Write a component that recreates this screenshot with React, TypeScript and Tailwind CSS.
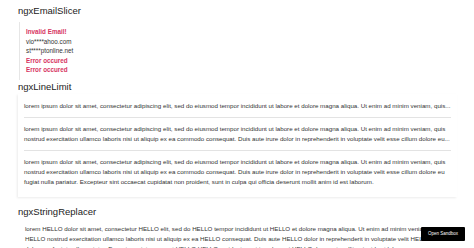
import React from 'react'

const font = { fontFamily: '"Liberation Sans", Arial, sans-serif' }

const emails = [
  { text: 'Invalid Email!', error: true },
  { text: 'vio****ahoo.com', error: false },
  { text: 'st****ptonline.net', error: false },
  { text: 'Error occured', error: true },
  { text: 'Error occured', error: true },
]

const limited: string[][] = [
  [
    'lorem ipsum dolor sit amet, consectetur adipiscing elit, sed do eiusmod tempor incididunt ut labore et dolore magna aliqua. Ut enim ad minim veniam, quis...',
  ],
  [
    'lorem ipsum dolor sit amet, consectetur adipiscing elit, sed do eiusmod tempor incididunt ut labore et dolore magna aliqua. Ut enim ad minim veniam, quis',
    'nostrud exercitation ullamco laboris nisi ut aliquip ex ea commodo consequat. Duis aute irure dolor in reprehenderit in voluptate velit esse cillum dolore eu...',
  ],
  [
    'lorem ipsum dolor sit amet, consectetur adipiscing elit, sed do eiusmod tempor incididunt ut labore et dolore magna aliqua. Ut enim ad minim veniam, quis',
    'nostrud exercitation ullamco laboris nisi ut aliquip ex ea commodo consequat. Duis aute irure dolor in reprehenderit in voluptate velit esse cillum dolore eu',
    'fugiat nulla pariatur. Excepteur sint occaecat cupidatat non proident, sunt in culpa qui officia deserunt mollit anim id est laborum.',
  ],
]

const replaced = [
  'lorem HELLO dolor sit amet, consectetur HELLO elit, sed do HELLO tempor incididunt ut HELLO et dolore magna aliqua. Ut enim ad minim veniam, quis',
  'HELLO nostrud exercitation ullamco laboris nisi ut aliquip ex ea HELLO consequat. Duis aute HELLO dolor in reprehenderit in voluptate velit HELLO cillum',
  'dolore eu fugiat nulla pariatur. Excepteur sint occaecat HELLO HELLO proident, sunt in culpa qui HELLO deserunt mollit anim id est laborum.',
]

function Heading({ children }: { children: React.ReactNode }) {
  return <h2 className="text-[9.5px] leading-[12px] text-[#222] font-normal">{children}</h2>
}

export default function App() {
  return (
    <div className="w-[474px] h-[248px] overflow-hidden bg-white relative" style={font}>
      <div className="pl-[18px] pr-[17px] pt-[5px]">
        <Heading>ngxEmailSlicer</Heading>
        <div className="mt-[5px] ml-[1px] border-l border-[#e6e6e6] pl-[6px] py-[5px] text-[6.3px] leading-[9.5px]">
          {emails.map((e, i) => (
            <div key={i} className={e.error ? 'font-bold text-[#d6335f]' : 'text-[#333]'}>
              {e.text}
            </div>
          ))}
        </div>

        <div className="mt-[1px]">
          <Heading>ngxLineLimit</Heading>
        </div>
        <div className="mt-[1px] shadow-[-1px_1px_2px_rgba(0,0,0,0.08)] pt-[1px] pb-[4px] pl-[6px] pr-[4px] text-[6.2px] leading-[10px] text-[#333]">
          {limited.map((lines, i) => (
            <div
              key={i}
              className={`py-[6px] mr-[2px] whitespace-nowrap ${i < limited.length - 1 ? 'border-b border-[#e3e3e3]' : ''}`}
            >
              {lines.map((l, j) => (
                <div key={j}>{l}</div>
              ))}
            </div>
          ))}
        </div>

        <div className="mt-[9px]">
          <Heading>ngxStringReplacer</Heading>
        </div>
        <div className="mt-[6px] pl-[7px] text-[6.2px] leading-[10px] text-[#333] whitespace-nowrap">
          {replaced.map((l, i) => (
            <div key={i}>{l}</div>
          ))}
        </div>
      </div>

      <button className="absolute right-[9px] bottom-[7px] w-[44px] h-[14px] bg-black text-white text-[4.5px] rounded-[1px] flex items-center justify-center">
        Open Sandbox
      </button>
    </div>
  )
}
